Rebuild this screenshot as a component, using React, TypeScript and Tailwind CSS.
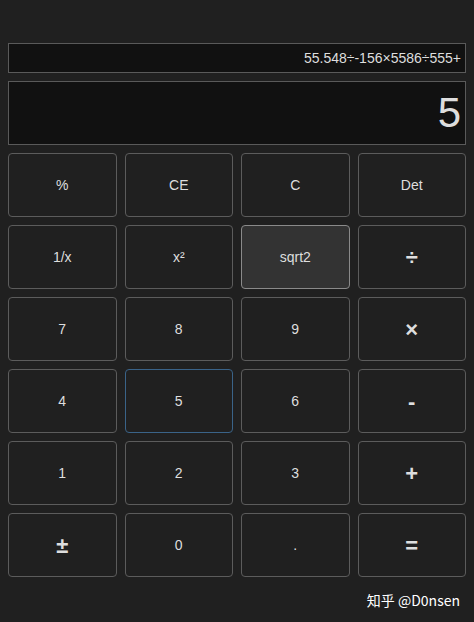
const keys = [
  { label: '%' },
  { label: 'CE' },
  { label: 'C' },
  { label: 'Det' },
  { label: '1/x' },
  { label: 'x²' },
  { label: 'sqrt2', hover: true },
  { label: '÷', big: true },
  { label: '7' },
  { label: '8' },
  { label: '9' },
  { label: '×', big: true },
  { label: '4' },
  { label: '5', focus: true },
  { label: '6' },
  { label: '-', big: true },
  { label: '1' },
  { label: '2' },
  { label: '3' },
  { label: '+', big: true },
  { label: '±', big: true },
  { label: '0' },
  { label: '.' },
  { label: '=', big: true },
]

export default function App() {
  return (
    <div className="relative h-[622px] w-[474px] bg-[#202020] px-2 pt-[43px] font-['Liberation_Sans',Arial,sans-serif] text-[#dedede]">
      <div className="flex h-[30px] items-center justify-end border border-[#5a5a5a] bg-[#111111] px-1 text-[14px]">
        55.548÷-156×5586÷555+
      </div>
      <div className="mt-2 flex h-[64px] items-center justify-end border border-[#5a5a5a] bg-[#111111] px-1 text-[42px] leading-none">
        5
      </div>
      <div className="mt-2 grid grid-cols-4 gap-x-2 gap-y-[8px]">
        {keys.map((k) => (
          <button
            key={k.label}
            type="button"
            className={
              'flex h-[64px] items-center justify-center rounded-[4px] border ' +
              (k.hover
                ? 'border-[#8a8a8a] bg-[#333333] '
                : k.focus
                  ? 'border-[#3a6388] bg-[#202020] '
                  : 'border-[#5c5c5c] bg-[#202020] ') +
              (k.big ? 'text-[22px] font-bold' : 'text-[14px]')
            }
          >
            {k.label}
          </button>
        ))}
      </div>
      <div className="absolute bottom-[11px] right-[14px] font-['Noto_Sans_CJK_SC',sans-serif] text-[14px] text-white">
        知乎 @D0nsen
      </div>
    </div>
  )
}
